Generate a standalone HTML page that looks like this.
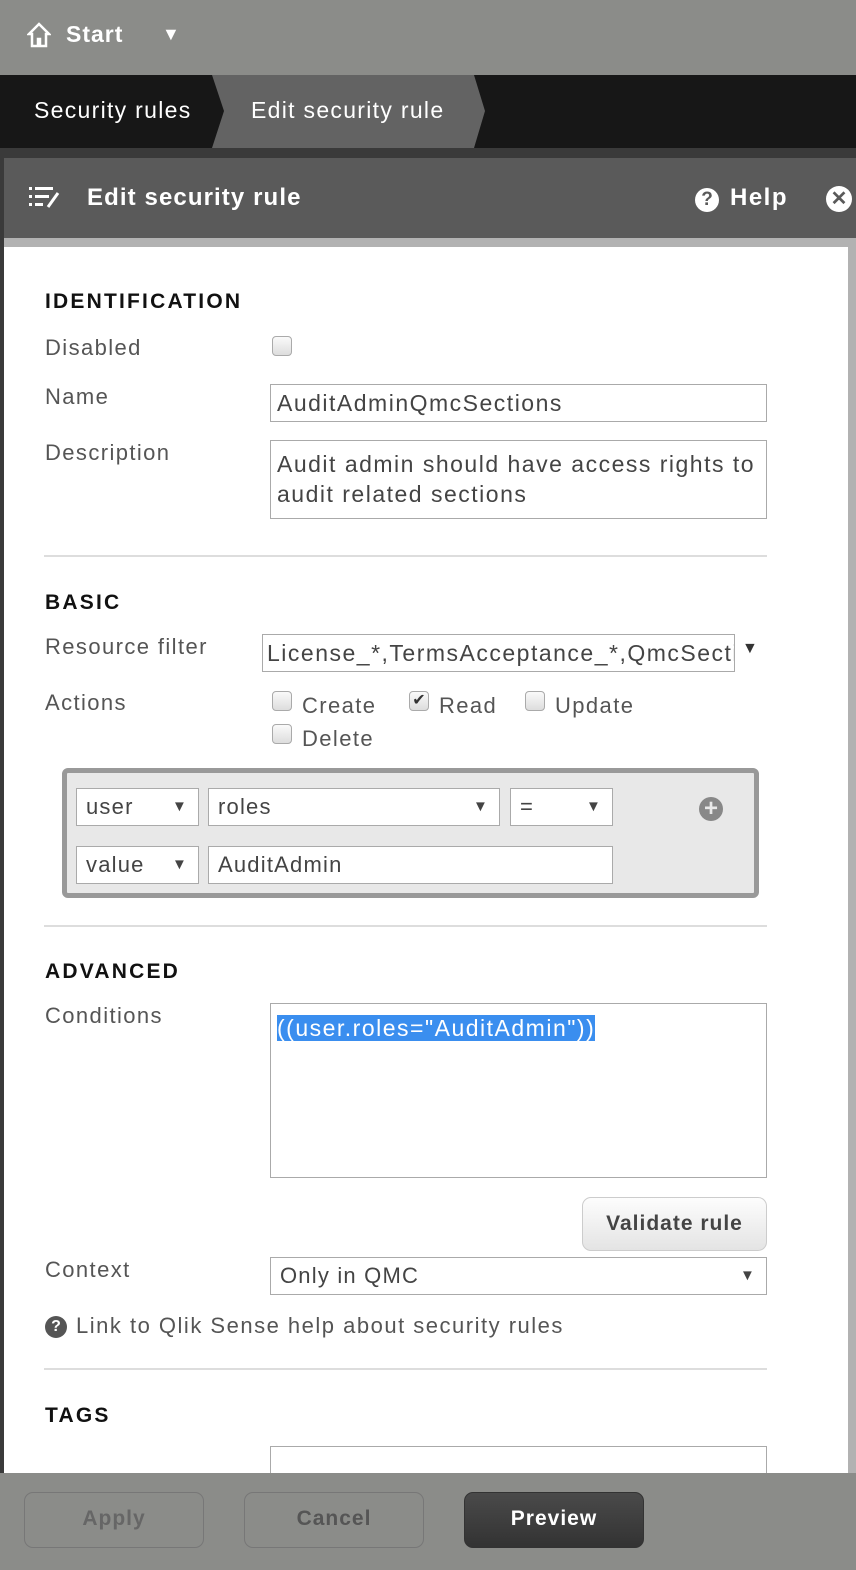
<!DOCTYPE html>
<html><head><meta charset="utf-8"><style>
*{box-sizing:border-box;margin:0;padding:0}
body{width:856px;height:1570px;position:relative;overflow:hidden;background:#3a3a3a;font-family:"Liberation Sans",sans-serif;color:#555}
.abs{position:absolute}
.top{left:0;top:0;width:856px;height:75px;background:#8b8c89}
.crumb{left:0;top:75px;width:856px;height:73px;background:#171717;letter-spacing:1.3px}
.ph{left:4px;top:158px;width:852px;height:80px;background:#5a5a5a;color:#fff}
.band{left:4px;top:238px;width:852px;height:9px;background:#b2b2b2}
.body{left:4px;top:247px;width:844px;height:1226px;background:#fff}
.sb{left:848px;top:247px;width:8px;height:1226px;background:#b2b2b2}
.foot{left:0;top:1473px;width:856px;height:97px;background:#8b8c89}
.h{font-weight:bold;color:#111;font-size:21px;left:45px;letter-spacing:2.2px}
.l{font-size:22px;color:#555;left:45px;letter-spacing:1.4px}
.inp{border:1px solid #aaa;background:#fff;font-size:23px;color:#444;padding:0 6px;line-height:36px;height:38px;letter-spacing:1.5px}
.hr{left:44px;width:723px;height:2px;background:#ddd}
.cb{width:20px;height:20px;border:1px solid #aaa;border-radius:4px;background:linear-gradient(#fafafa,#ddd)}
.sel{border:1px solid #aaa;background:#fff;height:38px;font-size:22px;color:#444;padding-left:9px;line-height:36px;letter-spacing:1.2px}
.sel span{position:absolute;right:10px;font-size:15px}
.btn{border-radius:9px;font-weight:bold;font-size:21px;text-align:center;line-height:52px;height:54px;letter-spacing:1px}
</style></head><body>
<div class="abs top">
<svg class="abs" style="left:27px;top:22px" width="24" height="26" viewBox="0 0 24 26"><path d="M12 2L2 12h3v12h6v-7h2v7h6V12h3z" fill="none" stroke="#fff" stroke-width="2.5"/></svg>
<div class="abs" style="left:66px;top:21px;font-size:23px;font-weight:bold;color:#fff;letter-spacing:1px">Start</div>
<div class="abs" style="left:162px;top:24px;font-size:18px;color:#fff">▼</div>
</div>
<div class="abs crumb">
<div class="abs" style="left:34px;top:22px;font-size:23px;color:#fff">Security rules</div>
<svg class="abs" style="left:210px;top:0" width="275" height="73"><polygon points="2,0 264,0 275,36 264,73 2,73 14,36" fill="#636363"/></svg>
<div class="abs" style="left:251px;top:22px;font-size:23px;color:#fff">Edit security rule</div>
</div>
<div class="abs ph">
<svg class="abs" style="left:25px;top:28px" width="40" height="24"><g fill="#fff"><rect x="0" y="1" width="3" height="3"/><rect x="0" y="9" width="3" height="3"/><rect x="0" y="17" width="3" height="3"/><rect x="6" y="1" width="18" height="3"/><rect x="6" y="9" width="14" height="3"/><rect x="6" y="17" width="8" height="3"/></g><path d="M19 21L29 7" stroke="#fff" stroke-width="3"/></svg>
<div class="abs" style="left:83px;top:26px;font-size:24px;font-weight:bold;letter-spacing:1.1px">Edit security rule</div>
<div class="abs" style="left:691px;top:30px;width:24px;height:24px;border-radius:50%;background:#fff;color:#5a5a5a;font-weight:bold;font-size:19px;text-align:center;line-height:24px">?</div>
<div class="abs" style="left:726px;top:26px;font-size:24px;font-weight:bold;letter-spacing:1.5px">Help</div>
<div class="abs" style="left:822px;top:28px;width:26px;height:26px;border-radius:50%;background:#fff;color:#5a5a5a;font-weight:bold;font-size:20px;text-align:center;line-height:26px">✕</div>
</div>
<div class="abs band"></div>
<div class="abs body"></div>
<div class="abs sb"></div>

<div class="abs h" style="top:290px">IDENTIFICATION</div>
<div class="abs l" style="top:335px">Disabled</div>
<div class="abs cb" style="left:272px;top:336px"></div>
<div class="abs l" style="top:384px">Name</div>
<div class="abs inp" style="left:270px;top:384px;width:497px">AuditAdminQmcSections</div>
<div class="abs l" style="top:440px">Description</div>
<div class="abs inp" style="left:270px;top:440px;width:497px;height:79px;line-height:30px;padding-top:8px">Audit admin should have access rights to audit related sections</div>
<div class="abs hr" style="top:555px"></div>

<div class="abs h" style="top:591px">BASIC</div>
<div class="abs l" style="top:634px">Resource filter</div>
<div class="abs inp" style="left:262px;top:634px;width:473px;white-space:nowrap;overflow:hidden;padding:0 4px">License_*,TermsAcceptance_*,QmcSections</div>
<div class="abs" style="left:742px;top:640px;font-size:16px;color:#333">▼</div>
<div class="abs l" style="top:690px">Actions</div>
<div class="abs cb" style="left:272px;top:691px"></div><div class="abs l" style="left:302px;top:693px">Create</div>
<div class="abs cb" style="left:409px;top:691px;color:#333;font-size:16px;text-align:center;line-height:18px">✔</div><div class="abs l" style="left:439px;top:693px">Read</div>
<div class="abs cb" style="left:525px;top:691px"></div><div class="abs l" style="left:555px;top:693px">Update</div>
<div class="abs cb" style="left:272px;top:724px"></div><div class="abs l" style="left:302px;top:726px">Delete</div>

<div class="abs" style="left:62px;top:768px;width:697px;height:130px;border:5px solid #999;border-radius:6px;background:#e8e8e8"></div>
<div class="abs sel" style="left:76px;top:788px;width:123px">user<span>▼</span></div>
<div class="abs sel" style="left:208px;top:788px;width:292px">roles<span>▼</span></div>
<div class="abs sel" style="left:510px;top:788px;width:103px">=<span>▼</span></div>
<div class="abs" style="left:699px;top:797px;width:24px;height:24px;border-radius:50%;background:#888;color:#e8e8e8;font-weight:bold;font-size:24px;text-align:center;line-height:23px">+</div>
<div class="abs sel" style="left:76px;top:846px;width:123px">value<span>▼</span></div>
<div class="abs sel" style="left:208px;top:846px;width:405px">AuditAdmin</div>
<div class="abs hr" style="top:925px"></div>

<div class="abs h" style="top:960px">ADVANCED</div>
<div class="abs l" style="top:1003px">Conditions</div>
<div class="abs inp" style="left:270px;top:1003px;width:497px;height:175px;line-height:28px;padding-top:10px"><span style="background:#3a8eef;color:#fff">((user.roles="AuditAdmin"))</span></div>
<div class="abs btn" style="left:582px;top:1197px;width:185px;background:linear-gradient(#fdfdfd,#e4e4e4);border:1px solid #ccc;color:#444">Validate rule</div>
<div class="abs l" style="top:1257px">Context</div>
<div class="abs sel" style="left:270px;top:1257px;width:497px">Only in QMC<span>▼</span></div>
<div class="abs" style="left:45px;top:1316px;width:22px;height:22px;border-radius:50%;background:#555;color:#fff;font-weight:bold;font-size:16px;text-align:center;line-height:22px">?</div>
<div class="abs l" style="left:76px;top:1313px;letter-spacing:1.5px">Link to Qlik Sense help about security rules</div>
<div class="abs hr" style="top:1368px"></div>
<div class="abs h" style="top:1404px">TAGS</div>
<div class="abs inp" style="left:270px;top:1446px;width:497px;height:40px"></div>

<div class="abs foot">
<div class="abs btn" style="left:24px;top:19px;width:180px;height:56px;border:1px solid #777;color:#666">Apply</div>
<div class="abs btn" style="left:244px;top:19px;width:180px;height:56px;border:1px solid #777;color:#555">Cancel</div>
<div class="abs btn" style="left:464px;top:19px;width:180px;height:56px;background:linear-gradient(#4a4a4a,#333);color:#fff;border:1px solid #333">Preview</div>
</div>
</body></html>
